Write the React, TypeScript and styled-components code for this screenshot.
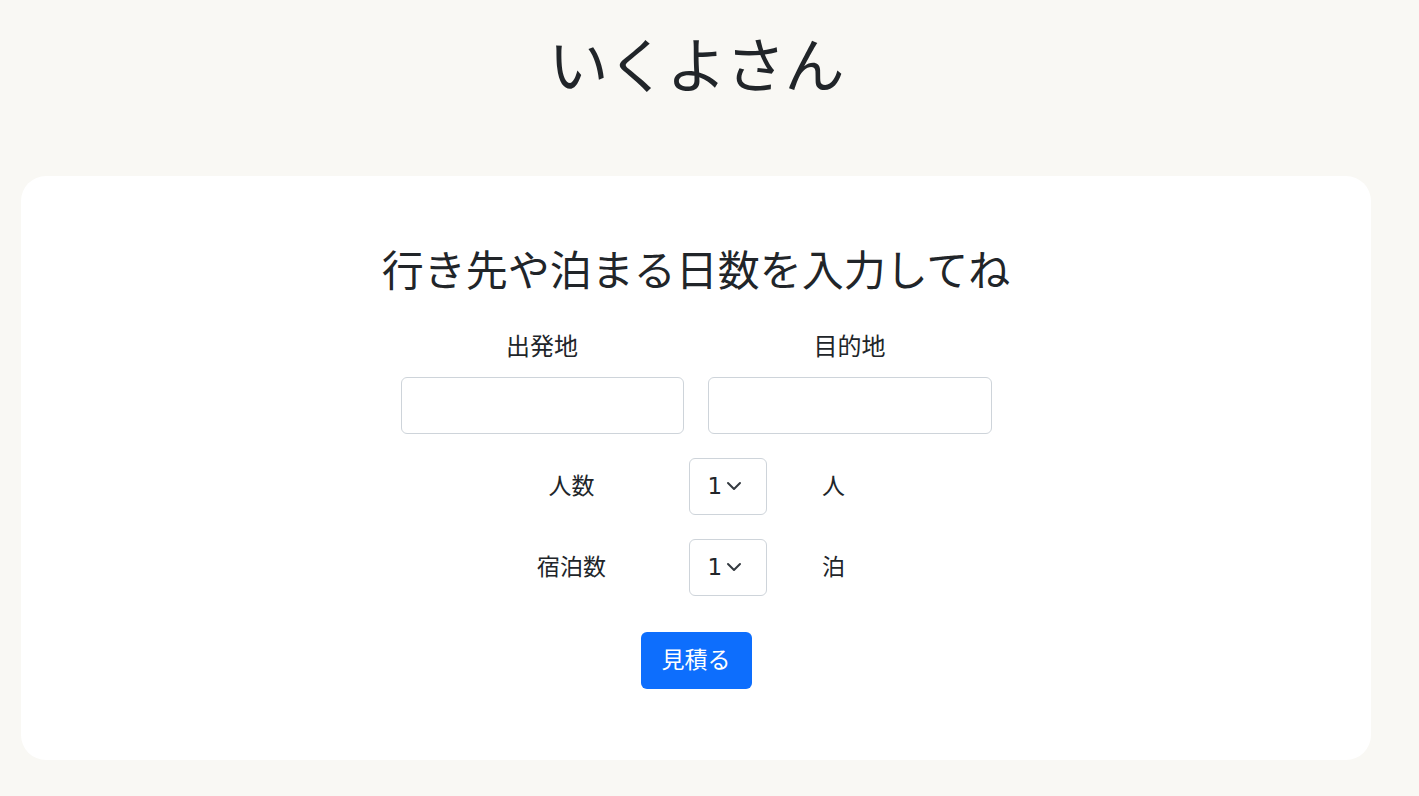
import styled, { createGlobalStyle } from "styled-components";

const GlobalStyle = createGlobalStyle`
  html, body {
    margin: 0;
    padding: 0;
    background: #f9f8f4;
  }
  body {
    font-family: "Noto Sans CJK JP", "Noto Sans", sans-serif;
    color: #212529;
  }
`;

function Chevron() {
  return (
    <svg width="16" height="16" viewBox="0 0 16 16" fill="none">
      <path
        d="M2 5 8 11 14 5"
        stroke="#343a40"
        strokeWidth="2"
        strokeLinecap="round"
        strokeLinejoin="round"
      />
    </svg>
  );
}

function NumberSelect() {
  return (
    <SelectWrapSld>
      <SelectSld defaultValue="1">
        {[1, 2, 3, 4, 5, 6, 7, 8, 9, 10].map((n) => (
          <option key={n} value={n}>
            {n}
          </option>
        ))}
      </SelectSld>
      <ChevronSld>
        <Chevron />
      </ChevronSld>
    </SelectWrapSld>
  );
}

export default function App() {
  return (
    <>
      <GlobalStyle />
      <PageSld>
        <TitleSld>いくよさん</TitleSld>
        <CardSld>
          <HeadingSld>行き先や泊まる日数を入力してね</HeadingSld>
          <PlaceGridSld>
            <FieldSld>
              <LabelSld>出発地</LabelSld>
              <InputSld type="text" />
            </FieldSld>
            <FieldSld>
              <LabelSld>目的地</LabelSld>
              <InputSld type="text" />
            </FieldSld>
          </PlaceGridSld>
          <CountRowSld>
            <span />
            <RowLabelSld>人数</RowLabelSld>
            <NumberSelect />
            <RowLabelSld>人</RowLabelSld>
          </CountRowSld>
          <CountRowSld>
            <span />
            <RowLabelSld>宿泊数</RowLabelSld>
            <NumberSelect />
            <RowLabelSld>泊</RowLabelSld>
          </CountRowSld>
          <ButtonSld type="button">見積る</ButtonSld>
        </CardSld>
      </PageSld>
    </>
  );
}

const PageSld = styled.div`
  margin: 0 48px 0 21px;
  padding-top: 26px;
  padding-bottom: 36px;
  display: flex;
  flex-direction: column;
  align-items: center;
`;

const TitleSld = styled.h1`
  margin: 0;
  font-size: 60px;
  font-weight: 400;
  line-height: 72px;
  letter-spacing: -1px;
`;

const CardSld = styled.div`
  box-sizing: border-box;
  width: 100%;
  margin-top: 78px;
  background: #ffffff;
  border-radius: 25px;
  padding: 67px 0 71px;
  display: flex;
  flex-direction: column;
  align-items: center;
`;

const HeadingSld = styled.h2`
  margin: 0;
  font-size: 42px;
  font-weight: 400;
  line-height: 50px;
`;

const PlaceGridSld = styled.div`
  display: grid;
  grid-template-columns: 283px 284px;
  column-gap: 24px;
  margin-top: 35px;
`;

const FieldSld = styled.div`
  display: flex;
  flex-direction: column;
  align-items: center;
`;

const LabelSld = styled.label`
  font-size: 24px;
  line-height: 34px;
  padding-bottom: 2px;
  margin-bottom: 13px;
`;

const InputSld = styled.input`
  box-sizing: border-box;
  width: 100%;
  height: 57px;
  border: 1px solid #ced4da;
  border-radius: 6px;
  background: #fff;
  font-size: 20px;
  padding: 0 12px;
  font-family: inherit;
  outline: none;
`;

const CountRowSld = styled.div`
  display: grid;
  grid-template-columns: 54px 234px 91px 108px 104px;
  align-items: center;
  margin-top: 24px;
`;

const RowLabelSld = styled.span`
  font-size: 23px;
  line-height: 34px;
  padding-bottom: 6px;
  text-align: center;
`;

const SelectWrapSld = styled.div`
  position: relative;
  width: 78px;
  height: 57px;
`;

const SelectSld = styled.select`
  box-sizing: border-box;
  appearance: none;
  -webkit-appearance: none;
  width: 100%;
  height: 100%;
  border: 1px solid #ced4da;
  border-radius: 6px;
  background: #fff;
  color: #212529;
  font-family: "DejaVu Sans", "Liberation Sans", sans-serif;
  font-size: 23px;
  padding: 0 0 2px 18px;
  outline: none;
`;

const ChevronSld = styled.span`
  position: absolute;
  left: 37px;
  top: 20px;
  width: 16px;
  height: 16px;
  pointer-events: none;
  display: flex;
`;

const ButtonSld = styled.button`
  margin-top: 36px;
  width: 111px;
  height: 57px;
  border: none;
  border-radius: 6px;
  background: #0d6efd;
  color: #ffffff;
  font-family: inherit;
  font-size: 23px;
  padding: 0 0 6px;
  cursor: pointer;
`;
